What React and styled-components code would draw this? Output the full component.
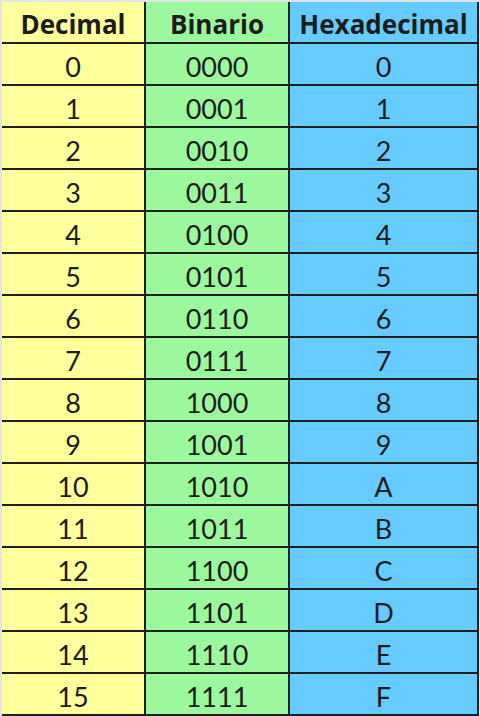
import React from 'react';
import styled, { createGlobalStyle } from 'styled-components';

const GlobalStyle = createGlobalStyle`
  html, body {
    margin: 0;
    padding: 0;
    background: #ffffff;
  }
  body {
    font-family: "Open Sans", "Liberation Sans", sans-serif;
  }
`;

const tones = {
  dec: '#ffff9c',
  bin: '#9cf89c',
  hex: '#66ccff',
};

const rows = Array.from({ length: 16 }, (_, n) => ({
  dec: String(n),
  bin: n.toString(2).padStart(4, '0'),
  hex: n.toString(16).toUpperCase(),
}));

const Frame = styled.div`
  width: 480px;
  height: 716px;
  box-sizing: border-box;
  border-top: 2px solid #e2e4ea;
  background: #e2e4ea;
  padding-left: 2px;
  padding-right: 1px;
`;

const Grid = styled.div`
  display: grid;
  grid-template-columns: 142px 142px 187px;
  grid-auto-rows: 40px;
  gap: 2px;
  padding: 0 2px 2px 0;
  background: #1e1e1e;
`;

const Cell = styled.div`
  background: ${p => tones[p.$tone]};
  color: #1c1c1c;
  font-family: ${p => (p.$head ? '"Open Sans", sans-serif' : 'Lato, "Open Sans", sans-serif')};
  font-size: ${p => (p.$head ? '26px' : '27px')};
  font-weight: ${p => (p.$head ? 700 : 400)};
  line-height: 40px;
  padding-top: ${p => (p.$head ? '2px' : '3px')};
  box-sizing: border-box;
  text-align: center;
  white-space: nowrap;
  overflow: hidden;
`;

const App = () => {
  return (
    <>
      <GlobalStyle />
      <Frame>
        <Grid>
          <Cell $tone="dec" $head>Decimal</Cell>
          <Cell $tone="bin" $head>Binario</Cell>
          <Cell $tone="hex" $head>Hexadecimal</Cell>
          {rows.map(r => (
            <React.Fragment key={r.dec}>
              <Cell $tone="dec">{r.dec}</Cell>
              <Cell $tone="bin">{r.bin}</Cell>
              <Cell $tone="hex">{r.hex}</Cell>
            </React.Fragment>
          ))}
        </Grid>
      </Frame>
    </>
  );
};

export default App;
